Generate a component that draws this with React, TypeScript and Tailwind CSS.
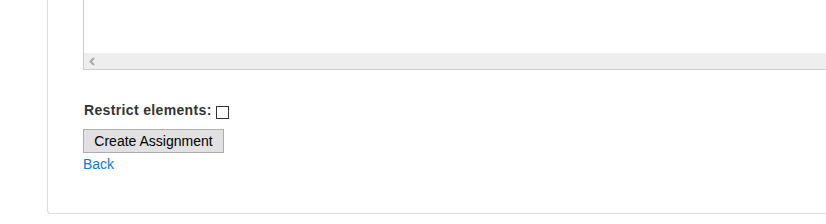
import React from 'react';

export default function App() {
  return (
    <div className="w-[826px] h-[224px] overflow-hidden bg-white font-['Liberation_Sans',Arial,sans-serif] text-[14px] text-[#333]">
      <div className="pl-[47px]">
        {/* panel, top and right edges are off screen */}
        <div className="h-[214px] border-l border-b border-[#ddd] rounded-bl-[4px] pl-[35px] pt-0">
          {/* text area with horizontal scrollbar */}
          <div className="h-[70px] border-l border-b border-[#ccc] flex flex-col">
            <div className="flex-1 bg-white"></div>
            <div className="h-[16px] bg-[#eee] flex items-center pl-[5px]">
              <svg width="6" height="9" viewBox="0 0 6 9">
                <path d="M5 1 L1.5 4.5 L5 8" stroke="#a9a9a9" strokeWidth="2" fill="none" />
              </svg>
            </div>
          </div>

          <div className="mt-[32px] flex items-center h-[17px] pl-[1px]">
            <label className="font-bold tracking-[0.35px]">Restrict elements:</label>
            <span className="ml-[4px] mt-[4px] w-[13px] h-[13px] border border-[#333] bg-white inline-block"></span>
          </div>

          <button className="mt-[10px] block h-[24px] w-[141px] bg-[#e1e1e1] border border-[#adadad] text-[14px] text-black leading-none">
            Create Assignment
          </button>
          <a href="#" className="block text-[#0a7ad1] leading-[17px] mt-[3px]">Back</a>
        </div>
      </div>
    </div>
  );
}
